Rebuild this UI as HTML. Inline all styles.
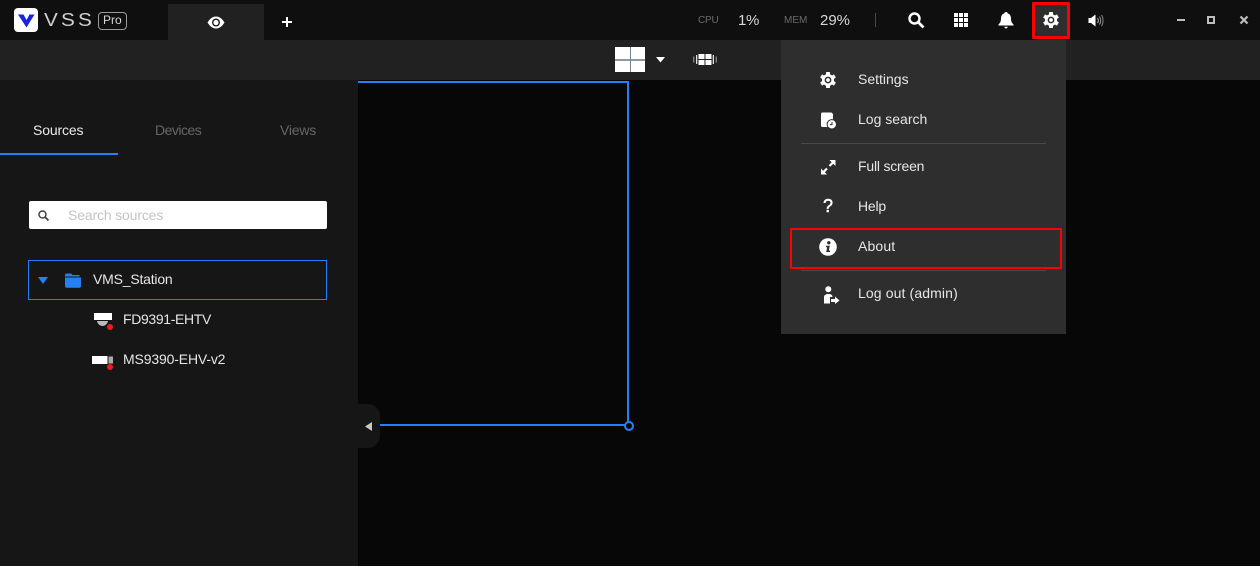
<!DOCTYPE html>
<html><head><meta charset="utf-8"><style>
html,body{margin:0;padding:0;width:1260px;height:566px;overflow:hidden;background:#070707;font-family:"Liberation Sans",sans-serif}
.a{position:absolute}
.t{position:absolute;white-space:nowrap;line-height:20px;font-size:14px;color:#e6e6e6}
svg{position:absolute;overflow:visible}
</style></head><body>
<div class="a" style="left:0;top:0;width:1260px;height:40px;background:#0f0f0f"></div>
<div class="a" style="left:0;top:40px;width:1260px;height:40px;background:#212121"></div>
<div class="a" style="left:0;top:80px;width:358px;height:486px;background:#161616"></div>
<div class="a" style="left:168px;top:4px;width:96px;height:36px;background:#212121"></div>

<div class="a" style="left:14px;top:8px;width:24px;height:24px;background:#fff;border-radius:4px"></div>
<svg style="left:14px;top:8px" width="24" height="24"><path d="M4 6.500H9.500L12.500 12L15.500 6.500H20.500L12.500 19.500Z" fill="#1a22e6"/></svg>
<div class="t" style="left:44px;top:9px;font-size:18px;letter-spacing:2.800px;color:#d0d0d0;line-height:22px;transform:scaleX(1.15);transform-origin:left">VSS</div>
<div class="a" style="left:98px;top:11.500px;width:27px;height:16px;border:1px solid #9a9a9a;border-radius:4px"></div>
<div class="t" style="left:103px;top:10px;font-size:12px;color:#d5d5d5">Pro</div>

<svg style="left:207px;top:16px" width="18" height="13"><path d="M0.500 6.500C3 2.500 5.700 0.500 9 0.500S15 2.500 17.500 6.500C15 10.500 12.300 12.500 9 12.500S3 10.500 0.500 6.500Z" fill="#fff"/><circle cx="9" cy="6.500" r="4" fill="#212121"/><circle cx="9" cy="6.500" r="2.600" fill="#fff"/></svg>
<svg style="left:282px;top:17px" width="10" height="10"><path d="M5 0V10M0 5H10" stroke="#fff" stroke-width="2"/></svg>

<div class="t" style="left:698px;top:11px;font-size:10px;letter-spacing:-.2px;color:#6a6a6a">CPU</div>
<div class="t" style="left:738px;top:11px;font-size:15px;letter-spacing:-.3px;color:#d8d8d8">1%</div>
<div class="t" style="left:784px;top:11px;font-size:10px;color:#6a6a6a">MEM</div>
<div class="t" style="left:820px;top:11px;font-size:15px;color:#d8d8d8">29%</div>
<div class="a" style="left:875px;top:13px;width:1px;height:14px;background:#4a4a4a"></div>

<svg style="left:908px;top:12px" width="17" height="17" fill="none" stroke="#fff"><circle cx="6.500" cy="6.500" r="5" stroke-width="2.400"/><path d="M10.300 10.300L15.500 15.500" stroke-width="2.800"/></svg>
<svg style="left:954px;top:13px" width="14" height="14" fill="#fff"><path d="M0 0h4v4H0zM5 0h4v4H5zM10 0h4v4h-4zM0 5h4v4H0zM5 5h4v4H5zM10 5h4v4h-4zM0 10h4v4H0zM5 10h4v4H5zM10 10h4v4h-4z"/></svg>
<svg style="left:998px;top:12px" width="16" height="17" fill="#fff"><path d="M8 0C9 0 9.600 .6 9.700 1.400C12 2.100 13 4 13 6.500C13 9.500 14 11 15.500 12.500V13.500H.5V12.500C2 11 3 9.500 3 6.500C3 4 4 2.100 6.300 1.400C6.400 .6 7 0 8 0ZM6.300 14.800H9.700C9.600 15.800 8.900 16.500 8 16.500S6.400 15.800 6.300 14.800Z"/></svg>

<div class="a" style="left:1032px;top:2px;width:32px;height:31px;background:#2e2e2e;border:3px solid #f00;border-radius:1px"></div>
<svg style="left:1043px;top:12px" width="16" height="16" viewBox="0 0 16 16" fill="#fff"><rect x="6" y="0" width="4" height="16" rx=".6"/><rect x="6" y="0" width="4" height="16" rx=".6" transform="rotate(60 8 8)"/><rect x="6" y="0" width="4" height="16" rx=".6" transform="rotate(120 8 8)"/><circle cx="8" cy="8" r="6"/><circle cx="8" cy="8" r="3.400" fill="#2e2e2e"/><circle cx="8" cy="8" r="1.900"/></svg>

<svg style="left:1088px;top:13px" width="16" height="15" fill="none"><path d="M0.500 5H3L7.500 1.500V13.500L3 10H0.500Z" fill="#fff"/><path d="M9.500 5C10.500 6.500 10.500 8.500 9.500 10" stroke="#bbb" stroke-width="1"/><path d="M11.500 3.500C13 5.500 13 9.500 11.500 11.500" stroke="#999" stroke-width="1"/><path d="M13.500 2C15.500 5 15.500 10 13.500 13" stroke="#888" stroke-width="1"/></svg>

<div class="a" style="left:1177px;top:19px;width:8px;height:2px;background:#bdbdbd"></div>
<div class="a" style="left:1207px;top:16px;width:4px;height:4px;border:2.500px solid #bdbdbd"></div>
<svg style="left:1240px;top:16px" width="8" height="8"><path d="M.5 .5L7.500 7.500M7.500 .5L.5 7.500" stroke="#bdbdbd" stroke-width="2.200"/></svg>

<svg style="left:615px;top:47px" width="30" height="25"><rect width="30" height="25" fill="#fff"/><rect y="12" width="30" height="2" fill="#8e9aa0"/><rect x="15" width="1" height="25" fill="#75838b"/></svg>
<svg style="left:656px;top:57px" width="9" height="6"><path d="M0 0H9L4.500 5.500Z" fill="#fff"/></svg>
<svg style="left:693px;top:53px" width="24" height="13" fill="#fff"><path d="M5.500 1h6v5h-6zM12.500 1h6v5h-6zM5.500 7h6v5h-6zM12.500 7h6v5h-6z"/><path d="M3 2h1.300v9H3zM19.700 2H21v9h-1.300z" fill="#ddd"/><path d="M0.300 3.500h1v6h-1zM22.700 3.500h1v6h-1z" fill="#aaa"/></svg>

<!-- view frame -->
<div class="a" style="left:358px;top:81px;width:270px;height:2px;background:#2680f5"></div>
<div class="a" style="left:627px;top:81px;width:2px;height:345px;background:#2680f5"></div>
<div class="a" style="left:378px;top:424px;width:250px;height:2px;background:#2680f5"></div>
<div class="a" style="left:624px;top:421px;width:6px;height:6px;border:2px solid #2680f5;border-radius:50%;background:#070707"></div>
<div class="a" style="left:358px;top:404px;width:22px;height:44px;background:#161616;border-radius:0 12px 12px 0"></div>
<svg style="left:365px;top:422px" width="7" height="9"><path d="M0 4.500L7 0V9Z" fill="#c8c8c8"/></svg>

<!-- tabs -->
<div class="t" style="left:33px;top:120px;color:#eaeaea;letter-spacing:-.15px">Sources</div>
<div class="t" style="left:155px;top:120px;color:#676767;letter-spacing:-.5px">Devices</div>
<div class="t" style="left:280px;top:120px;color:#676767;letter-spacing:-.2px">Views</div>
<div class="a" style="left:0;top:153px;width:118px;height:2px;background:#2680f5"></div>

<!-- search -->
<div class="a" style="left:29px;top:201px;width:298px;height:28px;background:#fff;border-radius:2px"></div>
<svg style="left:38px;top:210px" width="11" height="11" fill="none" stroke="#444"><circle cx="4.500" cy="4.500" r="3.500" stroke-width="1.500"/><path d="M7 7L10.500 10.500" stroke-width="1.800"/></svg>
<div class="t" style="left:68px;top:205px;color:#c4c4c4;letter-spacing:-.15px">Search sources</div>

<!-- tree -->
<div class="a" style="left:28px;top:260px;width:297px;height:38px;border:1px solid #2680f5"></div>
<svg style="left:38px;top:277px" width="10" height="7"><path d="M0 0H10L5 7Z" fill="#2680f5"/></svg>
<svg style="left:65px;top:273px" width="16" height="15" fill="#2680f5"><path d="M0 2C0 1 .6 .5 1.500 .5H6L7.500 2H14.500V3.500H0Z"/><path d="M0 4.500H16V13C16 14 15.400 14.800 14.500 14.800H1.500C.6 14.800 0 14 0 13Z"/></svg>
<div class="t" style="left:93px;top:269px;letter-spacing:-.2px">VMS_Station</div>

<svg style="left:94px;top:313px" width="20" height="18"><rect x="0" y="0" width="18" height="7" fill="#fff"/><path d="M3 8H14C13.500 11 11 13 8.500 13S3.500 11 3 8Z" fill="#bbb"/><circle cx="16" cy="14" r="3" fill="#f01a1a"/></svg>
<div class="t" style="left:123px;top:309px;letter-spacing:-.35px">FD9391-EHTV</div>
<svg style="left:92px;top:356px" width="22" height="15"><rect x="0" y="0" width="15.500" height="8" fill="#fff"/><rect x="16.500" y="0.500" width="4.500" height="7" fill="#aaa"/><circle cx="18" cy="11" r="3" fill="#f01a1a"/></svg>
<div class="t" style="left:123px;top:349px;letter-spacing:-.15px">MS9390-EHV-v2</div>

<!-- menu -->
<div class="a" style="left:781px;top:40px;width:285px;height:294px;background:#2e2e2e"></div>
<svg style="left:820px;top:72px" width="16" height="16" viewBox="0 0 16 16" fill="#fff"><rect x="6" y="0" width="4" height="16" rx=".6"/><rect x="6" y="0" width="4" height="16" rx=".6" transform="rotate(60 8 8)"/><rect x="6" y="0" width="4" height="16" rx=".6" transform="rotate(120 8 8)"/><circle cx="8" cy="8" r="6"/><circle cx="8" cy="8" r="3.400" fill="#2e2e2e"/><circle cx="8" cy="8" r="1.900"/></svg>
<div class="t" style="left:858px;top:69px">Settings</div>

<svg style="left:821px;top:112px" width="16" height="17"><path d="M1.500 .5H10.500L12 2V13 15H1.500C.6 15 0 14.400 0 13.500V2C0 1 .6 .5 1.500 .5Z" fill="#fff"/><circle cx="10.800" cy="12.300" r="5.200" fill="#2e2e2e"/><circle cx="10.800" cy="12.300" r="4.200" fill="#fff"/><path d="M11 10V12.600H8.800" fill="none" stroke="#2e2e2e" stroke-width="1"/></svg>
<div class="t" style="left:858px;top:109px">Log search</div>

<div class="a" style="left:801px;top:143px;width:245px;height:1px;background:#4a4a4a"></div>

<svg style="left:821px;top:160px" width="15" height="15" fill="#fff"><path d="M8.500 0H14.500V6L12.300 3.800L9.300 6.800L7.700 5.200L10.700 2.200Z"/><path d="M6 14.500H0V8.500L2.200 10.700L5.200 7.700L6.800 9.300L3.800 12.300Z"/></svg>
<div class="t" style="left:858px;top:156px;letter-spacing:-.2px">Full screen</div>

<div class="t" style="left:823px;top:196px;font-size:18px;color:#fff;-webkit-text-stroke:.5px #fff">?</div>
<div class="t" style="left:858px;top:196px;letter-spacing:-.2px">Help</div>

<div class="a" style="left:790px;top:228px;width:268px;height:37px;border:2px solid #f00;border-radius:1px"></div>
<svg style="left:819px;top:238px" width="18" height="18"><circle cx="9" cy="9" r="8.800" fill="#fff"/><circle cx="9.800" cy="4.800" r="1.700" fill="#2e2e2e"/><path d="M7 7.800H10.800L9.800 12.500H11V14H7.200L8.200 9.300H7Z" fill="#2e2e2e"/></svg>
<div class="t" style="left:858px;top:236px;letter-spacing:.15px">About</div>

<div class="a" style="left:801px;top:270px;width:245px;height:1px;background:#4a4a4a"></div>

<svg style="left:823px;top:286px" width="17" height="18" fill="#fff"><circle cx="5.300" cy="3.200" r="3"/><path d="M1 17.500V11.500C1 9 2.500 8 5.300 8S9.500 9 9.500 11H7V17.500Z"/><path d="M8 13H12V10.500L16.500 14.500L12 18V16H8Z"/></svg>
<div class="t" style="left:858px;top:283px;letter-spacing:.12px">Log out (admin)</div>
</body></html>
